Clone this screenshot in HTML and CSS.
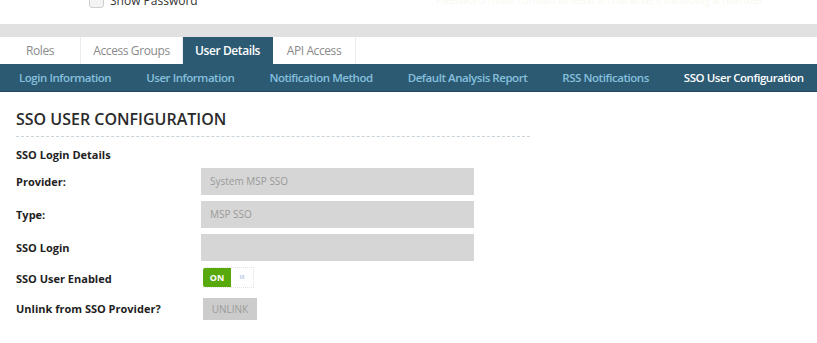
FILE: index.html
```html
<!DOCTYPE html>
<html lang="en">
<head>
  <meta charset="UTF-8" />
  <title>User Details - SSO User Configuration</title>
  <link rel="stylesheet" href="styles.css">
</head>
<body>
  <div class="top">
    <label class="show-pass">
      <span class="checkbox"></span>
      <span>Show Password</span>
    </label>
    <span class="faint-note">Password must contain at least 8 characters including a number</span>
  </div>

  <div class="band"></div>

  <div class="tabs">
    <div class="tab tab-roles">Roles</div>
    <div class="tab tab-groups">Access Groups</div>
    <div class="tab tab-user active">User Details</div>
    <div class="tab tab-api">API Access</div>
  </div>

  <div class="subnav">
    <a href="#">Login Information</a>
    <a href="#">User Information</a>
    <a href="#">Notification Method</a>
    <a href="#">Default Analysis Report</a>
    <a href="#">RSS Notifications</a>
    <a href="#" class="active">SSO User Configuration</a>
  </div>

  <div class="content">
    <h2 class="section-title">SSO USER CONFIGURATION</h2>

    <div class="form">
      <div class="form-heading">SSO Login Details</div>

      <div class="label">Provider:</div>
      <div class="field">System MSP SSO</div>

      <div class="label">Type:</div>
      <div class="field">MSP SSO</div>

      <div class="label">SSO Login</div>
      <div class="field"></div>

      <div class="label">SSO User Enabled</div>
      <div class="toggle">
        <span class="toggle-on">ON</span>
        <span class="toggle-grip">III</span>
      </div>

      <div class="label">Unlink from SSO Provider?</div>
      <div><button class="unlink">UNLINK</button></div>
    </div>
  </div>
</body>
</html>
```

FILE: styles.css
```css
body {
  margin: 0;
  font-family: 'Open Sans', sans-serif;
  background-color: #ffffff;
  color: #222222;
}

.top {
  height: 24px;
  overflow: hidden;
  display: flex;
  align-items: flex-start;
}

.show-pass {
  display: flex;
  align-items: center;
  gap: 6px;
  margin-top: -8px;
  padding-left: 89px;
  font-size: 12px;
  color: #333;
}

.checkbox {
  width: 13px;
  height: 13px;
  border: 1px solid #cfcfcf;
  border-radius: 3px;
  background: #f3f3f3;
}

.faint-note {
  margin-left: 238px;
  margin-top: -8px;
  font-size: 11px;
  color: #f8f8ef;
}

.band {
  height: 13px;
  background-color: #e1e1e1;
}

.tabs {
  display: flex;
  height: 27px;
}

.tab {
  line-height: 27px;
  font-size: 12px;
  letter-spacing: -0.4px;
  color: #8a8a8a;
  text-align: center;
  border-right: 1px solid #ececec;
}

.tab-roles { width: 80px; }
.tab-groups { width: 101px; }
.tab-user { width: 89px; }
.tab-api { width: 82px; }

.tab.active {
  background-color: #2c5a73;
  color: #ffffff;
  font-weight: 600;
  border-right-color: #2c5a73;
}

.subnav {
  display: flex;
  align-items: center;
  gap: 35px;
  height: 27px;
  padding-left: 19px;
  background-color: #2c5a73;
  border-bottom: 1px solid #24495e;
  white-space: nowrap;
}

.subnav a {
  flex-shrink: 0;
  font-size: 11.5px;
  font-weight: 600;
  letter-spacing: -0.45px;
  color: #86c0dd;
  text-decoration: none;
}

.subnav a.active {
  color: #ffffff;
}

.content {
  padding: 16px 16px 0 16px;
}

.section-title {
  width: 514px;
  margin: 0;
  padding-bottom: 6px;
  font-size: 16px;
  line-height: 22px;
  font-weight: 600;
  color: #2a2a2a;
  border-bottom: 1px dashed #c9d3da;
}

.form {
  display: grid;
  grid-template-columns: 185px 273px;
  row-gap: 6px;
  align-items: center;
  margin-top: 11px;
}

.form-heading {
  grid-column: 1 / 3;
  font-size: 11px;
  font-weight: 700;
  line-height: 14px;
}

.label {
  font-size: 11px;
  font-weight: 700;
  color: #1e1e1e;
}

.field {
  height: 27px;
  line-height: 27px;
  padding-left: 9px;
  background-color: #d6d6d6;
  font-size: 10px;
  color: #9a9a9a;
}

.toggle {
  display: flex;
  width: 50px;
  height: 19px;
  margin: 0 0 2px 2px;
  border: 1px dotted #e2e2e2;
  border-left: none;
}

.toggle-on {
  width: 28px;
  line-height: 19px;
  text-align: center;
  background-color: #58a90c;
  color: #ffffff;
  font-size: 9px;
  font-weight: 700;
  border-radius: 2px 0 0 2px;
}

.toggle-grip {
  flex-grow: 1;
  line-height: 19px;
  text-align: center;
  font-size: 6px;
  color: #8a9fd0;
}

.unlink {
  margin-left: 2px;
  width: 54px;
  height: 22px;
  border: none;
  background-color: #cccccc;
  color: #9b9b9b;
  font-family: 'Open Sans', sans-serif;
  font-size: 10px;
}
```
